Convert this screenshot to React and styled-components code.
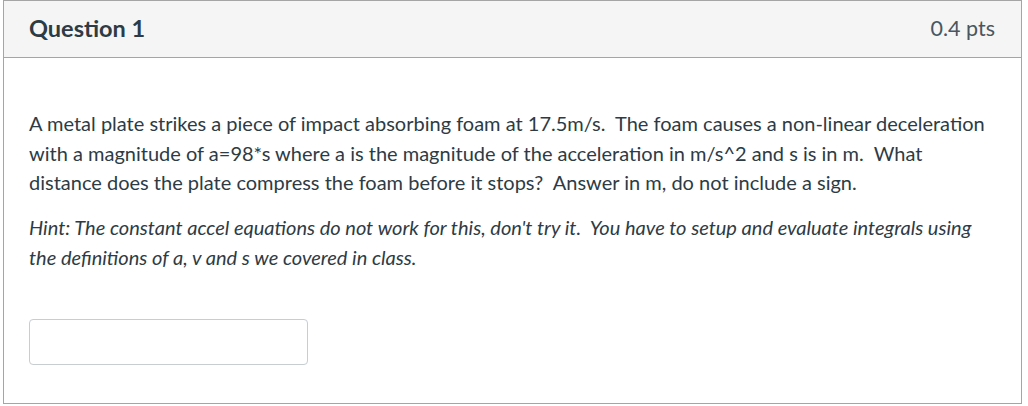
import React from "react";
import styled, { createGlobalStyle } from "styled-components";

const GlobalStyle = createGlobalStyle`
    body {
        margin: 0;
        background: #fff;
        font-family: Lato, "Liberation Sans", sans-serif;
    }
`;

const Card = styled.div`
    margin-left: 3px;
    width: 1017px;
    height: 402px;
    border: 1px solid #a5a5a5;
    display: flex;
    flex-direction: column;
    color: #2d3b45;
`;

const Header = styled.div`
    height: 57px;
    flex-shrink: 0;
    box-sizing: border-box;
    background: #f5f5f5;
    border-bottom: 1px solid #a5a5a5;
    display: flex;
    align-items: center;
    justify-content: space-between;
    padding: 0 26px 3px 25px;
`;

const Title = styled.div`
    font-size: 23.5px;
    font-weight: 700;
    color: #2d3b45;
`;

const Points = styled.div`
    font-size: 21.5px;
    color: #4a5660;
`;

const Body = styled.div`
    padding: 51px 25px 0;
`;

const Para = styled.p`
    margin: 0 0 15.5px;
    font-size: 20px;
    line-height: 29.5px;
    font-style: ${(p) => (p.$italic ? "italic" : "normal")};
    color: #2d3b45;
`;

const Answer = styled.input`
    display: block;
    margin-top: 47px;
    width: 279px;
    height: 46px;
    box-sizing: border-box;
    border: 1px solid #c7cdd1;
    border-radius: 4px;
    background: #fff;
    outline: none;
`;

export default function App() {
    return (
        <>
            <GlobalStyle />
            <Card>
                <Header>
                    <Title>Question 1</Title>
                    <Points>0.4 pts</Points>
                </Header>
                <Body>
                    <Para>
                        A metal plate strikes a piece of impact absorbing foam at 17.5m/s.&nbsp; The foam causes a non-linear deceleration with a magnitude of a=98*s where a is the magnitude of the acceleration in m/s^2 and s is in m.&nbsp; What distance does the plate compress the foam before it stops?&nbsp; Answer in m, do not include a sign.
                    </Para>
                    <Para $italic>
                        Hint: The constant accel equations do not work for this, don't try it.&nbsp; You have to setup and evaluate integrals using the definitions of a, v and s we covered in class.
                    </Para>
                    <Answer type="text" />
                </Body>
            </Card>
        </>
    );
}
